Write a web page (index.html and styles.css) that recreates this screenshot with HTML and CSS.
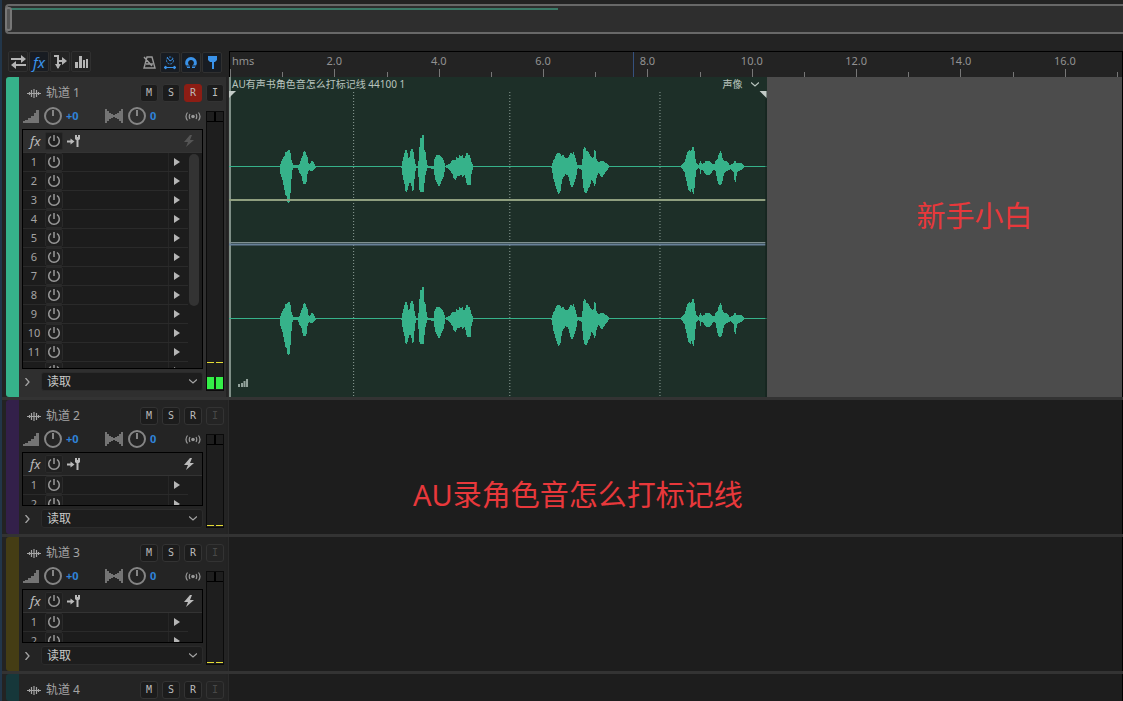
FILE: index.html
```html
<!DOCTYPE html>
<html lang="zh-CN">
<head>
  <meta charset="UTF-8">
  <meta name="viewport" content="width=device-width, initial-scale=1.0">
  <title>多轨编辑器</title>
  <link rel="stylesheet" href="styles.css">
</head>
<body>
  <!-- shared icons -->
  <svg class="defs" width="0" height="0" aria-hidden="true">
    <symbol id="i-power" viewBox="0 0 14 14">
      <path d="M4 2.500a5.300 5.300 0 1 0 6 0M7 1v6" fill="none" stroke="currentColor" stroke-width="1.500"/>
    </symbol>
    <symbol id="i-play" viewBox="0 0 6 8"><path d="M0 0l6 4-6 4z" fill="currentColor"/></symbol>
    <symbol id="i-wave" viewBox="0 0 14 9">
      <path d="M0 4.500h14M2.500 3v3M4.500 1v7M7 0v9M9.500 1v7M11.500 3v3" fill="none" stroke="currentColor" stroke-width="1.200"/>
    </symbol>
    <symbol id="i-volume" viewBox="0 0 16 14">
      <path d="M0 14v-2h2v-1h3v-2h3v-2h3v-3h2v-3h3v13z" fill="currentColor"/>
    </symbol>
    <symbol id="i-pan" viewBox="0 0 18 14">
      <path d="M0 0h2v2h2v2h2v1h2v4h-2v1h-2v2h-2v2h-2zM18 0h-2v2h-2v2h-2v1h-2v4h2v1h2v2h2v2h2zM8 6h2v2h-2z" fill="currentColor"/>
    </symbol>
    <symbol id="i-knob" viewBox="0 0 18 18">
      <circle cx="9" cy="9" r="8" fill="none" stroke="currentColor" stroke-width="2"/>
      <path d="M9 3v6" stroke="currentColor" stroke-width="2"/>
    </symbol>
    <symbol id="i-monitor" viewBox="0 0 16 9">
      <circle cx="8" cy="4.500" r="1.800" fill="currentColor"/>
      <path d="M5 2q-1.500 2.500 0 5M11 2q1.500 2.500 0 5M2.500 .5q-3 4 0 8M13.500 .5q3 4 0 8" fill="none" stroke="currentColor" stroke-width="1.200"/>
    </symbol>
    <symbol id="i-pre" viewBox="0 0 13 12">
      <path d="M0 6.500h5M10.500 4v8" fill="none" stroke="currentColor" stroke-width="2"/>
      <path d="M3.500 3.500l4 3-4 3zM8 0h2v2h1v-2h2v4l-1 1h-3l-1-1z" fill="currentColor"/>
    </symbol>
    <symbol id="i-bolt" viewBox="0 0 12 12"><path d="M7 0l-6 7h4l-2 5 8-7h-4l2-5z" fill="currentColor"/></symbol>
    <symbol id="i-down" viewBox="0 0 8 5"><path d="M0 .5l4 3.500 4-3.500" fill="none" stroke="currentColor" stroke-width="1.300"/></symbol>
    <symbol id="i-right" viewBox="0 0 5 8"><path d="M.5 0l3.500 4-3.500 4" fill="none" stroke="currentColor" stroke-width="1.300"/></symbol>
  </svg>

  <div class="editor">
    <div class="overview">
      <div class="overview-handle"></div>
      <div class="overview-range"></div>
    </div>

    <div class="top-row">
      <div class="toolbar">
        <div class="tool-group">
          <button class="tool" aria-label="输入/输出"><svg width="15" height="14" viewBox="0 0 15 14"><path d="M0 4h12M3 10h12" stroke="currentColor" stroke-width="2"/><path d="M10 0l5 4-5 4zM5 6l-5 4 5 4z" fill="currentColor"/></svg></button>
          <button class="tool on fx" aria-label="效果">fx</button>
          <button class="tool" aria-label="发送"><svg width="13" height="14" viewBox="0 0 13 14"><path d="M0 1h4v12M4 6h6" fill="none" stroke="currentColor" stroke-width="2"/><path d="M8 2l5 4-5 4zM1 9h6l-3 5z" fill="currentColor"/></svg></button>
          <button class="tool" aria-label="EQ"><svg width="13" height="12" viewBox="0 0 13 12"><path d="M0 6h3v6h-3zM4 0h3v12h-3zM8 4h2v8h-2zM11 3h2v9h-2z" fill="currentColor"/></svg></button>
        </div>
        <div class="tool-group right">
          <button class="tool plain" aria-label="节拍器"><svg width="13" height="13" viewBox="0 0 13 13"><path d="M4 1h5l3 11h-11zM1 1l8 9M3 8h7" fill="none" stroke="currentColor" stroke-width="1.400"/></svg></button>
          <button class="tool on" aria-label="时间"><svg width="14" height="14" viewBox="0 0 14 14"><path d="M1 11.500h12M3 10l-2 1.500 2 1.500zM11 10l2 1.500-2 1.500z" fill="currentColor" stroke="currentColor"/><circle cx="7" cy="4.500" r="3.500" fill="none" stroke="currentColor" stroke-dasharray="2 1"/><path d="M4 1l3 4 3-2" fill="none" stroke="currentColor"/></svg></button>
          <button class="tool on" aria-label="对齐"><svg width="14" height="13" viewBox="0 0 14 13"><path d="M4.500 12v-1.500a4.400 4.400 0 1 1 5 0v1.500" fill="none" stroke="currentColor" stroke-width="3"/><path d="M1 10h5M8 10h5" stroke="#181c22"/></svg></button>
          <button class="tool on" aria-label="标记"><svg width="9" height="13" viewBox="0 0 9 13"><path d="M0 0h9v4l-2 2h-1v7h-2v-7h-2l-2-2z" fill="currentColor"/></svg></button>
        </div>
      </div>
      <div class="ruler">
        <span class="unit">hms</span>
        <span class="label">2.0</span>
        <span class="label">4.0</span>
        <span class="label">6.0</span>
        <span class="label">8.0</span>
        <span class="label">10.0</span>
        <span class="label">12.0</span>
        <span class="label">14.0</span>
        <span class="label">16.0</span>
        <i class="tick"></i><i class="tick"></i><i class="tick"></i><i class="tick"></i><i class="tick"></i><i class="tick"></i>
        <i class="tick"></i><i class="tick"></i><i class="tick"></i><i class="tick"></i><i class="tick"></i><i class="tick"></i>
        <i class="tick"></i><i class="tick"></i><i class="tick"></i><i class="tick"></i><i class="tick"></i><i class="tick"></i>
        <div class="cursor"></div>
      </div>
    </div>

    <section class="track selected green">
      <div class="color"></div>
      <div class="head">
        <div class="title">
          <svg class="wave-icon" width="14" height="9"><use href="#i-wave"/></svg>
          <span class="name">轨道 1</span>
          <button class="sq">M</button><button class="sq">S</button><button class="sq rec">R</button><button class="sq">I</button>
        </div>
        <div class="controls">
          <div class="knobs">
            <svg class="dim" width="16" height="14"><use href="#i-volume"/></svg>
            <svg class="knob" width="18" height="18"><use href="#i-knob"/></svg><span class="value vol">+0</span>
            <svg class="dim" width="18" height="14"><use href="#i-pan"/></svg>
            <svg class="knob" width="18" height="18"><use href="#i-knob"/></svg><span class="value">0</span>
            <svg class="monitor" width="16" height="9"><use href="#i-monitor"/></svg>
          </div>
          <div class="rack tall">
            <div class="rack-head">
              <span class="fx">fx</span>
              <button class="power" aria-label="开关"><svg width="14" height="14"><use href="#i-power"/></svg></button>
              <svg width="13" height="12"><use href="#i-pre"/></svg>
              <svg class="bolt" width="12" height="12"><use href="#i-bolt"/></svg>
            </div>
            <div class="slots">
              <div class="slot"><span>1</span><button class="power" aria-label="开关"><svg width="14" height="14"><use href="#i-power"/></svg></button><button class="more" aria-label="选择效果"><svg width="6" height="8"><use href="#i-play"/></svg></button></div>
              <div class="slot"><span>2</span><button class="power" aria-label="开关"><svg width="14" height="14"><use href="#i-power"/></svg></button><button class="more" aria-label="选择效果"><svg width="6" height="8"><use href="#i-play"/></svg></button></div>
              <div class="slot"><span>3</span><button class="power" aria-label="开关"><svg width="14" height="14"><use href="#i-power"/></svg></button><button class="more" aria-label="选择效果"><svg width="6" height="8"><use href="#i-play"/></svg></button></div>
              <div class="slot"><span>4</span><button class="power" aria-label="开关"><svg width="14" height="14"><use href="#i-power"/></svg></button><button class="more" aria-label="选择效果"><svg width="6" height="8"><use href="#i-play"/></svg></button></div>
              <div class="slot"><span>5</span><button class="power" aria-label="开关"><svg width="14" height="14"><use href="#i-power"/></svg></button><button class="more" aria-label="选择效果"><svg width="6" height="8"><use href="#i-play"/></svg></button></div>
              <div class="slot"><span>6</span><button class="power" aria-label="开关"><svg width="14" height="14"><use href="#i-power"/></svg></button><button class="more" aria-label="选择效果"><svg width="6" height="8"><use href="#i-play"/></svg></button></div>
              <div class="slot"><span>7</span><button class="power" aria-label="开关"><svg width="14" height="14"><use href="#i-power"/></svg></button><button class="more" aria-label="选择效果"><svg width="6" height="8"><use href="#i-play"/></svg></button></div>
              <div class="slot"><span>8</span><button class="power" aria-label="开关"><svg width="14" height="14"><use href="#i-power"/></svg></button><button class="more" aria-label="选择效果"><svg width="6" height="8"><use href="#i-play"/></svg></button></div>
              <div class="slot"><span>9</span><button class="power" aria-label="开关"><svg width="14" height="14"><use href="#i-power"/></svg></button><button class="more" aria-label="选择效果"><svg width="6" height="8"><use href="#i-play"/></svg></button></div>
              <div class="slot"><span>10</span><button class="power" aria-label="开关"><svg width="14" height="14"><use href="#i-power"/></svg></button><button class="more" aria-label="选择效果"><svg width="6" height="8"><use href="#i-play"/></svg></button></div>
              <div class="slot"><span>11</span><button class="power" aria-label="开关"><svg width="14" height="14"><use href="#i-power"/></svg></button><button class="more" aria-label="选择效果"><svg width="6" height="8"><use href="#i-play"/></svg></button></div>
              <div class="slot"><span></span><button class="power" aria-label="开关"><svg width="14" height="14"><use href="#i-power"/></svg></button><button class="more" aria-label="选择效果"><svg width="6" height="8"><use href="#i-play"/></svg></button></div>
              <div class="scroll-thumb"></div>
            </div>
          </div>
          <div class="automation">
            <svg width="5" height="8"><use href="#i-right"/></svg>
            <div class="select">
              <select aria-label="轨道 1 自动化"><option>读取</option></select>
              <svg width="8" height="5"><use href="#i-down"/></svg>
            </div>
          </div>
        </div>
        <div class="meter live">
          <div class="clip-lights"></div>
          <div class="peak"></div>
          <div class="level"></div>
        </div>
      </div>
      <div class="lane">
        <div class="clip">
          <svg class="clip-art" viewBox="0 0 537 320" preserveAspectRatio="none">
            <defs>
              <!-- three units to a pixel, zero line at y 0 -->
              <path id="wave" d="M0-1H150L152-12 156-18 159-28 163-30 166-42 171-45 174-50 179-50 182-36 185-14 190-6 204-4 208-8 213-22 217-28 220-44 225-48 228-38 232-30 235-10 240-8 244-16 249-16 252-8 258-1H515L518-24 521-30 524-46 527-53 531-48 534-26 538-28 541-46 545-53 548-54 551-40 554-14 558-3 564-3 566-30 568-60 570-84 575-86 577-95 580-95 582-50 586-44 589-20 592-3 611-3 613-22 617-32 622-35 628-36 633-28 639-22 643-10 646-2 652-5 660-10 665-17 670-20 676-18 679-28 684-24 688-36 692-28 696-38 700-26 704-24 707-38 710-44 714-36 719-34 723-14 730-1H965L968-16 973-24 977-36 983-42 988-42 993-32 998-36 1003-28 1010-24 1016-30 1021-40 1026-38 1030-44 1033-32 1037-20 1041-6 1054-4 1057-28 1060-58 1064-60 1067-48 1073-46 1079-34 1085-28 1089-20 1091-50 1095-52 1097-28 1102-14 1108-14 1117-18 1124-12 1130-8 1137-1H1350L1358-8 1364-16 1368-34 1372-44 1378-50 1382-42 1385-58 1391-58 1394-30 1398-10 1406-3 1409-20 1412-12 1416-8 1422-10 1427-18 1436-17 1441-14 1447-8 1453-8 1456-20 1461-22 1465-38 1471-48 1474-36 1477-22 1484-16 1492-14 1496-6 1503-6 1510-12 1513-20 1517-12 1525-10 1534-9 1542-1H1611V1H1542L1534 9 1525 14 1519 20 1516 50 1512 40 1509 16 1500 8 1492 12 1484 16 1479 28 1475 48 1469 58 1463 50 1459 34 1456 16 1450 8 1444 18 1438 24 1428 26 1420 16 1414 8 1410 22 1406 3 1398 10 1394 40 1391 82 1387 82 1384 66 1380 76 1374 70 1368 44 1362 16 1350 1H1137L1130 12 1122 22 1115 34 1110 28 1104 18 1099 30 1094 64 1088 44 1083 40 1078 62 1074 64 1070 78 1064 82 1060 70 1057 44 1054 10 1042 4 1038 30 1033 44 1028 60 1022 62 1018 44 1013 28 1006 22 1002 30 997 34 994 50 990 76 985 84 980 74 974 52 969 34 965 8 962 1H730L724 20 721 54 716 57 710 56 706 36 702 24 697 32 692 24 687 30 682 28 677 40 671 38 667 22 660 14 652 5 646 2 640 30 634 44 629 58 624 58 619 48 614 36 611 8 592 3 586 24 583 48 580 76 574 76 569 78 566 60 564 4 558 6 554 24 551 68 547 74 542 50 537 50 533 66 530 76 526 74 522 44 518 36 515 6 510 1H258L252 8 248 14 243 14 238 10 233 16 230 44 226 54 220 52 217 42 213 24 208 20 204 6 190 6 186 14 184 44 181 84 178 108 173 110 170 88 165 84 162 62 158 44 155 34 152 26 150 10V1H0Z"/>
            </defs>
            <path d="M1 0v320" stroke="#7f8f87" stroke-width="2"/>
            <path d="M124.500 15v305M280.500 15v305M430.500 15v305" stroke="#8fa099" stroke-dasharray="1 2"/>
            <path d="M0 89.500h537M0 241.500h537" stroke="#36b28a"/>
            <g fill="#36b28a" shape-rendering="crispEdges">
              <use href="#wave" transform="translate(1 89.500) scale(.3333)"/>
              <use href="#wave" transform="translate(1 241.500) scale(.3333)"/>
            </g>
            <path d="M0 123h536" stroke="#8f9f7f" stroke-width="2"/>
            <path d="M0 165.500h536" stroke="#7f9090"/>
            <path d="M0 167.500h536" stroke="#688098" stroke-width="2"/>
            <path d="M0 14h7l-7 7zM530 14h7v7z" fill="#c3cbc7"/>
            <path d="M536.500 22v298" stroke="#12201b"/>
            <path d="M9 307h2v3h-2zM12 306h2v4h-2zM14.500 304h2v6h-2zM17 302h2v8h-2z" fill="#93a39c"/>
          </svg>
          <div class="clip-head">
            <span>AU有声书角色音怎么打标记线 44100 1</span>
            <button class="clip-pan">声像 <svg width="8" height="5"><use href="#i-down"/></svg></button>
          </div>
        </div>
        <p class="note">新手小白</p>
      </div>
    </section>

    <section class="track purple">
      <div class="color"></div>
      <div class="head">
        <div class="title">
          <svg class="wave-icon" width="14" height="9"><use href="#i-wave"/></svg>
          <span class="name">轨道 2</span>
          <button class="sq">M</button><button class="sq">S</button><button class="sq">R</button><button class="sq" disabled>I</button>
        </div>
        <div class="controls">
          <div class="knobs">
            <svg class="dim" width="16" height="14"><use href="#i-volume"/></svg>
            <svg class="knob" width="18" height="18"><use href="#i-knob"/></svg><span class="value vol">+0</span>
            <svg class="dim" width="18" height="14"><use href="#i-pan"/></svg>
            <svg class="knob" width="18" height="18"><use href="#i-knob"/></svg><span class="value">0</span>
            <svg class="monitor" width="16" height="9"><use href="#i-monitor"/></svg>
          </div>
          <div class="rack">
            <div class="rack-head">
              <span class="fx">fx</span>
              <button class="power" aria-label="开关"><svg width="14" height="14"><use href="#i-power"/></svg></button>
              <svg width="13" height="12"><use href="#i-pre"/></svg>
              <svg class="bolt" width="12" height="12"><use href="#i-bolt"/></svg>
            </div>
            <div class="slots">
              <div class="slot"><span>1</span><button class="power" aria-label="开关"><svg width="14" height="14"><use href="#i-power"/></svg></button><button class="more" aria-label="选择效果"><svg width="6" height="8"><use href="#i-play"/></svg></button></div>
              <div class="slot"><span>2</span><button class="power" aria-label="开关"><svg width="14" height="14"><use href="#i-power"/></svg></button><button class="more" aria-label="选择效果"><svg width="6" height="8"><use href="#i-play"/></svg></button></div>
            </div>
          </div>
          <div class="automation">
            <svg width="5" height="8"><use href="#i-right"/></svg>
            <div class="select">
              <select aria-label="轨道 2 自动化"><option>读取</option></select>
              <svg width="8" height="5"><use href="#i-down"/></svg>
            </div>
          </div>
        </div>
        <div class="meter">
          <div class="clip-lights"></div>
          <div class="peak"></div>
        </div>
      </div>
      <div class="lane">
        <p class="note wide">AU录角色音怎么打标记线</p>
      </div>
    </section>

    <section class="track olive">
      <div class="color"></div>
      <div class="head">
        <div class="title">
          <svg class="wave-icon" width="14" height="9"><use href="#i-wave"/></svg>
          <span class="name">轨道 3</span>
          <button class="sq">M</button><button class="sq">S</button><button class="sq">R</button><button class="sq" disabled>I</button>
        </div>
        <div class="controls">
          <div class="knobs">
            <svg class="dim" width="16" height="14"><use href="#i-volume"/></svg>
            <svg class="knob" width="18" height="18"><use href="#i-knob"/></svg><span class="value vol">+0</span>
            <svg class="dim" width="18" height="14"><use href="#i-pan"/></svg>
            <svg class="knob" width="18" height="18"><use href="#i-knob"/></svg><span class="value">0</span>
            <svg class="monitor" width="16" height="9"><use href="#i-monitor"/></svg>
          </div>
          <div class="rack">
            <div class="rack-head">
              <span class="fx">fx</span>
              <button class="power" aria-label="开关"><svg width="14" height="14"><use href="#i-power"/></svg></button>
              <svg width="13" height="12"><use href="#i-pre"/></svg>
              <svg class="bolt" width="12" height="12"><use href="#i-bolt"/></svg>
            </div>
            <div class="slots">
              <div class="slot"><span>1</span><button class="power" aria-label="开关"><svg width="14" height="14"><use href="#i-power"/></svg></button><button class="more" aria-label="选择效果"><svg width="6" height="8"><use href="#i-play"/></svg></button></div>
              <div class="slot"><span>2</span><button class="power" aria-label="开关"><svg width="14" height="14"><use href="#i-power"/></svg></button><button class="more" aria-label="选择效果"><svg width="6" height="8"><use href="#i-play"/></svg></button></div>
            </div>
          </div>
          <div class="automation">
            <svg width="5" height="8"><use href="#i-right"/></svg>
            <div class="select">
              <select aria-label="轨道 3 自动化"><option>读取</option></select>
              <svg width="8" height="5"><use href="#i-down"/></svg>
            </div>
          </div>
        </div>
        <div class="meter">
          <div class="clip-lights"></div>
          <div class="peak"></div>
        </div>
      </div>
      <div class="lane"></div>
    </section>

    <section class="track teal">
      <div class="color"></div>
      <div class="head">
        <div class="title">
          <svg class="wave-icon" width="14" height="9"><use href="#i-wave"/></svg>
          <span class="name">轨道 4</span>
          <button class="sq">M</button><button class="sq">S</button><button class="sq">R</button><button class="sq" disabled>I</button>
        </div>
      </div>
      <div class="lane"></div>
    </section>
  </div>
</body>
</html>
```

FILE: styles.css
```css
* {
  box-sizing: border-box;
}

body {
  margin: 0;
  background: #232323;
  color: #a4a4a4;
  font: 11px/16px "Noto Sans", "Noto Sans CJK SC", sans-serif;
}

button,
select {
  margin: 0;
  padding: 0;
  border: 0;
  background: none;
  color: inherit;
  font: inherit;
}

svg {
  display: block;
  flex: none;
}

.defs {
  position: absolute;
}

.editor {
  height: 100vh;
  display: flex;
  flex-direction: column;
  border-left: 2px solid #22364a;
  padding-top: 4px;
  overflow: hidden;
}

/* overview strip */
.overview {
  position: relative;
  flex: none;
  height: 30px;
  margin: 0 0 17px 3px;
  border: 2px solid #686868;
  border-right: 0;
  border-radius: 4px 0 0 4px;
  background: #2e2e2e;
}

.overview-handle {
  position: absolute;
  left: -2px;
  top: 1px;
  width: 7px;
  height: 24px;
  border: 2px solid #777;
  border-radius: 3px;
  background: #555;
}

.overview-range {
  width: 49%;
  height: 2px;
  margin: 2px 0 0 4px;
  background: #3b7a68;
}

/* toolbar and ruler */
.top-row {
  flex: none;
  display: flex;
  height: 26px;
}

.toolbar {
  flex: none;
  width: 227px;
  display: flex;
  justify-content: space-between;
  padding: 0 7px 0 6px;
}

.tool-group {
  display: flex;
  gap: 1px;
  height: 21px;
}

.tool-group.right {
  margin-top: 1px;
}

.tool {
  display: flex;
  align-items: center;
  justify-content: center;
  width: 20px;
  border: 1px solid #303030;
  border-radius: 2px;
  color: #b5b5b5;
}

.tool.on {
  background: #181c22;
  color: #3a93ea;
}

.tool.plain {
  border-color: transparent;
  color: #999;
}

.fx {
  font-style: italic;
  font-size: 13px;
}

.tool.fx {
  font-size: 15px;
}

.ruler {
  position: relative;
  flex: 1;
  display: grid;
  grid-template-columns: repeat(17, 1fr) 5px;
  grid-template-rows: 17px 8px;
  border: 1px solid #000;
  border-bottom: 0;
}

.ruler span {
  grid-row: 1;
  padding-top: 1px;
  color: #929292;
}

.unit {
  grid-column: 1;
  padding-left: 2px;
}

.label {
  text-align: center;
}

.label:nth-of-type(2) { grid-column: 2 / span 2; }
.label:nth-of-type(3) { grid-column: 4 / span 2; }
.label:nth-of-type(4) { grid-column: 6 / span 2; }
.label:nth-of-type(5) { grid-column: 8 / span 2; }
.label:nth-of-type(6) { grid-column: 10 / span 2; }
.label:nth-of-type(7) { grid-column: 12 / span 2; }
.label:nth-of-type(8) { grid-column: 14 / span 2; }
.label:nth-of-type(9) { grid-column: 16 / span 2; }

.tick {
  grid-row: 2;
  align-self: end;
  height: 5px;
  border-left: 1px solid #777;
}

.tick:nth-of-type(odd) {
  height: 8px;
}

.cursor {
  position: absolute;
  left: 45.2%;
  top: 0;
  bottom: 0;
  border-left: 1px solid #35517e;
}

/* tracks */
.track {
  flex: none;
  display: flex;
  border-bottom: 3px solid #333;
}

.track:last-child {
  flex: 1;
  min-height: 0;
  border-bottom: 0;
  overflow: hidden;
}

.color {
  width: 13px;
  margin-left: 4px;
  border-radius: 3px 0 0 3px;
  background: var(--tint);
}

.green { --tint: #36b28a; }
.purple { --tint: #33204a; }
.olive { --tint: #453d14; }
.teal { --tint: #16373a; }

.head {
  flex: none;
  width: 207px;
  display: grid;
  grid-template-columns: 181px 18px;
  grid-template-rows: 18px auto;
  gap: 4px 3px;
  padding: 7px 2px 6px 3px;
  background: #242424;
}

.selected .head {
  background: #2f2f2f;
}

.track:last-child .head {
  padding-bottom: 0;
  row-gap: 0;
}

.title {
  grid-column: 1 / 3;
  display: flex;
  align-items: center;
  gap: 4px;
  padding-left: 5px;
}

.name {
  flex: 1;
  padding-left: 1px;
  font-size: 12px;
}

.sq {
  width: 18px;
  height: 18px;
  border: 1px solid #333;
  border-radius: 3px;
  background: #1c1c1c;
  color: #bbb;
  font: 10px/16px "DejaVu Sans Mono", monospace;
}

.sq.rec {
  border-color: #8c1d14;
  background: #8c1d14;
}

.sq:disabled {
  background: none;
  color: #484848;
}

.controls {
  display: flex;
  flex-direction: column;
}

.knobs {
  display: flex;
  align-items: center;
  height: 20px;
  margin-bottom: 3px;
  padding: 0 2px 0 1px;
}

.dim {
  color: #747474;
}

.knob {
  margin: 0 4px 0 5px;
  color: #858585;
}

.value {
  color: #3083d8;
  font-weight: bold;
}

.vol {
  width: 39px;
}

.monitor {
  margin-left: auto;
  color: #999;
}

.rack {
  height: 54px;
  border: 1px solid #000;
  background: #1c1c1c;
  overflow: hidden;
}

.rack.tall {
  height: 240px;
}

.rack-head {
  display: flex;
  align-items: center;
  height: 23px;
  padding: 0 7px;
  border-bottom: 1px solid #333;
  background: #242424;
  color: #bbb;
}

.selected .rack-head {
  background: #2f2f2f;
}

.rack-head .fx {
  width: 15px;
}

.power {
  display: flex;
  align-items: center;
  justify-content: center;
  width: 18px;
  height: 18px;
  border: 1px solid #2a2a2a;
  border-radius: 2px;
  background: #1f1f1f;
  color: #999;
}

.rack-head .power {
  margin-right: 4px;
}

.bolt {
  margin-left: auto;
}

.selected .bolt {
  color: #555;
}

.slots {
  position: relative;
}

.slot {
  display: flex;
  align-items: center;
  width: 165px;
  height: 19px;
  border-bottom: 1px solid #2a2a2a;
}

.slot span {
  width: 22px;
  text-align: center;
}

.more {
  display: flex;
  align-items: center;
  width: 20px;
  height: 18px;
  margin-left: auto;
  padding-left: 5px;
  border-left: 1px solid #262626;
  color: #b5b5b5;
}

.scroll-thumb {
  position: absolute;
  top: 1px;
  right: 3px;
  width: 10px;
  height: 152px;
  border-radius: 5px;
  background: #333;
}

.automation {
  display: flex;
  align-items: center;
  gap: 11px;
  margin-top: 3px;
  padding-left: 3px;
}

.select {
  position: relative;
  flex: 1;
}

.select select {
  display: block;
  width: 100%;
  height: 19px;
  padding: 0 5px;
  border: 1px solid #2b2b2b;
  border-radius: 3px;
  background: #1d1d1d;
  color: #c8c8c8;
  font-size: 12px;
  appearance: none;
}

.select svg {
  position: absolute;
  right: 6px;
  top: 7px;
  pointer-events: none;
}

.meter {
  display: flex;
  flex-direction: column;
  margin-top: 5px;
  border: 1px solid #0b0b0b;
  background: #1e1e1e;
}

.clip-lights {
  flex: none;
  height: 10px;
  border-bottom: 1px solid #000;
  background: linear-gradient(#000, #000) center / 2px 100% no-repeat;
}

.peak {
  flex: none;
  height: 1px;
  margin: auto 0 1px;
  background: linear-gradient(#1e1e1e, #1e1e1e) center / 2px 100% no-repeat #e5dc35;
}

.level {
  flex: none;
  height: 12px;
  margin: 13px 0 1px;
  background: linear-gradient(#10200f, #10200f) center / 2px 100% no-repeat #34ef48;
}

/* lanes */
.lane {
  flex: 1;
  display: flex;
  margin-left: 2px;
  border-left: 1px solid #2b2b2b;
  border-right: 1px solid #000;
  background: #1d1d1d;
}

.selected .lane {
  background: #4c4c4c;
}

.clip {
  position: relative;
  width: 60.2%;
  background: #1d2f28;
}

.clip-art {
  position: absolute;
  width: 100%;
  height: 100%;
}

.clip-head {
  position: relative;
  display: flex;
  justify-content: space-between;
  padding: 0 8px 0 3px;
  color: #b8c4be;
  font-size: 10px;
  line-height: 15px;
}

.clip-pan {
  display: flex;
  align-items: center;
  gap: 8px;
}

.note {
  align-self: flex-start;
  margin: 118px 0 0 150px;
  color: #e8383b;
  font-size: 29px;
  line-height: 42px;
}

.note.wide {
  margin: 74px 0 0 184px;
}
```
